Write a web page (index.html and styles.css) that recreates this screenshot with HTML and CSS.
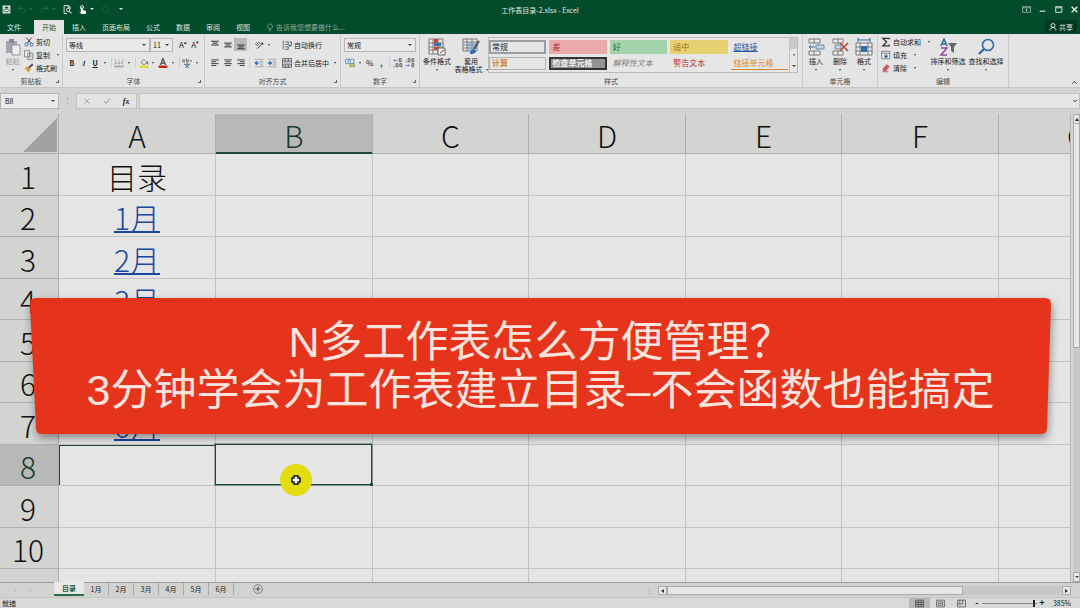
FILE: index.html
```html
<!DOCTYPE html>
<html lang="zh-CN">
<head>
  <meta charset="UTF-8">
  <title>工作表目录-2.xlsx - Excel</title>
  <meta name="viewport" content="width=device-width, initial-scale=1.0">
  <link rel="stylesheet" href="styles.css">
</head>
<body>
  <header class="title-bar">
    <div class="quick-access">
      <button aria-label="保存"><svg viewBox="0 0 16 16"><path d="M2 2h12v12H2zM4 2v5h8V2M5 14v-4h6v4" stroke-width="1.8"/></svg></button>
      <button class="dim with-drop" aria-label="撤消"><svg viewBox="0 0 16 16"><path d="M6 2L2 6l4 4M2 6h8c5 0 5 7 0 8" stroke-width="1.6"/></svg></button>
      <button class="dim with-drop" aria-label="恢复"><svg viewBox="0 0 16 16"><path d="M10 2l4 4-4 4M14 6H6c-5 0-5 7 0 8" stroke-width="1.6"/></svg></button>
      <button aria-label="打印预览"><svg viewBox="0 0 16 16"><path d="M7 15H2V1h8l3 3v3M9 1v4h4" stroke-width="1.6"/><circle cx="9" cy="9" r="3" stroke-width="1.6"/><path d="M11 11l4 4" stroke-width="2"/></svg></button>
      <button class="with-drop" aria-label="触摸模式"><svg viewBox="0 0 16 16"><circle cx="7" cy="4" r="3" stroke-width="1.6"/><path fill="#fff" d="M5 4h3v5l6 1v6H6l-4-4 3 1z"/></svg></button>
      <button class="dim" aria-label="刷新"><svg viewBox="0 0 16 16"><circle cx="8" cy="8" r="6"/></svg></button>
      <button class="with-drop" aria-label="自定义"></button>
    </div>
    <h1>工作表目录-2.xlsx - Excel</h1>
    <div class="window-buttons">
      <button aria-label="功能区显示选项"><svg viewBox="0 0 16 16"><path d="M1 3h14v10H1zM1 5h14M8 12V7M6 9l2-2 2 2"/></svg></button>
      <button aria-label="最小化"><svg viewBox="0 0 16 16"><path d="M3 11h10" stroke-width="2"/></svg></button>
      <button aria-label="最大化"><svg viewBox="0 0 16 16"><path d="M3 3h11v10H3zM3 5h11" stroke-width="1.6"/></svg></button>
      <button aria-label="关闭"><svg viewBox="0 0 16 16"><path d="M3 3l10 10M13 3L3 13" stroke-width="2.5"/></svg></button>
    </div>
  </header>

  <nav class="ribbon-tabs">
    <button class="file">文件</button>
    <button class="active">开始</button>
    <button>插入</button>
    <button>页面布局</button>
    <button>公式</button>
    <button>数据</button>
    <button>审阅</button>
    <button>视图</button>
    <button class="tell-me"><svg viewBox="0 0 16 16"><path d="M6 11C1 7 3 1 8 1s7 6 2 10zM6 13h4M7 15h2" stroke-width="1.5"/></svg>告诉我您想要做什么...</button>
    <button class="share"><svg viewBox="0 0 16 16"><circle cx="8" cy="5" r="4" stroke-width="2"/><path d="M2 15c0-8 12-8 12 0" stroke-width="2"/></svg>共享</button>
  </nav>

  <section class="ribbon">
    <div class="group clipboard">
      <div class="group-body">
        <button class="big disabled"><svg viewBox="0 0 18 18"><path fill="#aaa4b0" d="M2 3h11v12H2z"/><path fill="#8d8794" d="M5 1h5v4H5z"/><path fill="#f0eef2" stroke="#98929e" d="M8 7h8v10H8z"/></svg><span>粘贴</span><i class="arrow"></i></button>
        <div class="stack">
          <button><svg viewBox="0 0 16 16"><path stroke="#444" stroke-width="1.6" d="M4 1l7 9M12 1L5 10"/><g stroke="#2f6cab" stroke-width="1.5"><circle cx="4" cy="12" r="2.5"/><circle cx="12" cy="12" r="2.5"/></g></svg>剪切</button>
          <button><svg viewBox="0 0 16 16"><path fill="#eee" stroke="#555" d="M1 1h8v10H1zM6 5h8v10H6z"/><path stroke="#2f6cab" d="M8 8h4M8 11h4"/></svg>复制<i class="arrow"></i></button>
          <button><svg viewBox="0 0 16 16"><path fill="#d99a3a" d="M1 8l5-3 5 5-4 5z"/><path stroke="#444" stroke-width="3" d="M8 7l6-5"/></svg>格式刷</button>
        </div>
      </div>
      <footer>剪贴板<i class="launcher"></i></footer>
    </div>

    <div class="group font">
      <div class="group-body rows">
        <div class="row">
          <label class="combo font-name"><select aria-label="字体"><option>等线</option></select></label>
          <label class="combo font-size"><select aria-label="字号"><option>11</option></select></label>
          <button class="tool grow" aria-label="增大字号">A<sup>▴</sup></button>
          <button class="tool grow" aria-label="减小字号">A<sup>▾</sup></button>
        </div>
        <div class="row">
          <button class="tool"><b>B</b></button>
          <button class="tool"><b><em>I</em></b></button>
          <button class="tool"><b><u>U</u></b></button>
          <button class="drop" aria-label="下划线"></button>
          <i class="sep"></i>
          <button class="tool" aria-label="边框"><svg viewBox="0 0 16 16"><path stroke="#777" stroke-dasharray="2 1" d="M2 2v12M8 2v12M14 2v12M2 8h12"/><path stroke="#555" d="M1 14h14"/></svg></button>
          <button class="drop" aria-label="边框选项"></button>
          <i class="sep"></i>
          <button class="tool" aria-label="填充颜色"><svg viewBox="0 0 16 16"><path fill="#e8e2d0" stroke="#555" d="M3 7l5-5 5 5-5 4z"/><path stroke="#2f6cab" stroke-width="2" d="M13 6l1 4"/><path fill="#dede2c" d="M1 12h14v4H1z"/></svg></button>
          <button class="drop" aria-label="填充选项"></button>
          <button class="tool" aria-label="字体颜色"><svg viewBox="0 0 16 16"><path stroke="#444" stroke-width="2" d="M4 11l4-10 4 10M5 8h6"/><path fill="#c3221b" d="M1 12h14v4H1z"/></svg></button>
          <button class="drop" aria-label="颜色选项"></button>
          <i class="sep"></i>
          <button class="tool" aria-label="拼音"><svg viewBox="0 0 16 16"><path stroke="#444" d="M1 3h3v3H1zM7 1v5h3V3H7M12 3l2 3 2-3"/><path stroke="#2f6cab" stroke-width="1.6" d="M8 7v2M3 10h10M5 11l6 5M11 11l-6 5"/></svg></button>
          <button class="drop" aria-label="拼音选项"></button>
        </div>
      </div>
      <footer>字体<i class="launcher"></i></footer>
    </div>

    <div class="group align">
      <div class="group-body">
        <div class="rows align-tools">
          <div class="row">
            <button class="tool" aria-label="顶端对齐"><svg viewBox="0 0 16 16"><path d="M2 2h12M4 5h8M2 8h12" stroke-width="1.5"/></svg></button>
            <button class="tool" aria-label="垂直居中"><svg viewBox="0 0 16 16"><path d="M2 5h12M4 8h8M2 11h12" stroke-width="1.5"/></svg></button>
            <button class="tool pressed" aria-label="底端对齐"><svg viewBox="0 0 16 16"><path d="M2 8h12M4 11h8M2 14h12" stroke-width="1.5"/></svg></button>
            <i class="sep"></i>
            <button class="tool" aria-label="方向"><svg viewBox="0 0 16 16"><path d="M2 6l3 3 2-2-3-3M7 3l3 3M5 14L14 5M11 5h3v3" stroke-width="1.3"/></svg></button>
            <button class="drop" aria-label="方向选项"></button>
          </div>
          <div class="row">
            <button class="tool" aria-label="左对齐"><svg viewBox="0 0 16 16"><path d="M2 3h12M2 6h8M2 9h12M2 12h8" stroke-width="1.3"/></svg></button>
            <button class="tool" aria-label="居中"><svg viewBox="0 0 16 16"><path d="M2 3h12M4 6h8M2 9h12M4 12h8" stroke-width="1.3"/></svg></button>
            <button class="tool" aria-label="右对齐"><svg viewBox="0 0 16 16"><path d="M2 3h12M6 6h8M2 9h12M6 12h8" stroke-width="1.3"/></svg></button>
            <i class="sep"></i>
            <button class="tool" aria-label="减少缩进"><svg viewBox="0 0 16 16"><path stroke="#888" d="M1 2h14M9 5h6M9 8h6M9 11h6M1 14h14"/><path stroke="#2f6cab" stroke-width="2" d="M8 8H2M5 5L2 8l3 3"/></svg></button>
            <button class="tool" aria-label="增加缩进"><svg viewBox="0 0 16 16"><path stroke="#888" d="M1 2h14M9 5h6M9 8h6M9 11h6M1 14h14"/><path stroke="#2f6cab" stroke-width="2" d="M1 8h6M4 5l3 3-3 3"/></svg></button>
          </div>
        </div>
        <div class="rows">
          <button class="row text-tool"><svg viewBox="0 0 16 16"><path d="M2 1v14M5 3h5v4H5M5 11h5v4H5"/><path stroke="#2f6cab" stroke-width="1.5" d="M12 3h3v6h-4M13 7l-2 2 2 2"/></svg>自动换行</button>
          <button class="row text-tool"><svg viewBox="0 0 16 16"><path d="M1 1h14v14H1zM1 5h14M1 11h14M5 1v4M10 1v4M5 11v4M10 11v4"/><path stroke="#2f6cab" d="M3 8h10"/></svg>合并后居中<i class="arrow"></i></button>
        </div>
      </div>
      <footer>对齐方式<i class="launcher"></i></footer>
    </div>

    <div class="group number">
      <div class="group-body rows">
        <div class="row">
          <label class="combo number-format"><select aria-label="数字格式"><option>常规</option></select></label>
        </div>
        <div class="row">
          <button class="tool" aria-label="会计数字格式"><svg viewBox="0 0 16 16"><path fill="#dfe8f0" stroke="#2f6cab" d="M1 2h13v7H1z"/><circle cx="7" cy="5" r="2" stroke="#2f6cab"/><path fill="#e0c660" stroke="#777" d="M8 9h7v5H8z"/></svg></button>
          <button class="drop" aria-label="会计格式选项"></button>
          <button class="tool percent">%</button>
          <button class="tool"><b>,</b></button>
          <i class="sep"></i>
          <button class="tool" aria-label="增加小数位数"><svg viewBox="0 0 16 16"><path stroke="#2f6cab" d="M1 4h6M3 2L1 4l2 2"/><path d="M10 1h3v5h-3zM5 9h3v5H5zM11 9h3v5h-3zM2 13v2"/></svg></button>
          <button class="tool" aria-label="减少小数位数"><svg viewBox="0 0 16 16"><path stroke="#2f6cab" d="M1 12h6M5 10l2 2-2 2"/><path d="M5 1h3v5H5zM11 1h3v5h-3zM11 9h3v5h-3zM2 5v2"/></svg></button>
        </div>
      </div>
      <footer>数字<i class="launcher"></i></footer>
    </div>

    <div class="group styles">
      <div class="group-body">
        <button class="big wide"><svg viewBox="0 0 18 18"><path fill="#eee" stroke="#777" d="M1 1h14v15H1zM1 5h14M1 9h14M1 12h14M5 1v15M10 1v15"/><path fill="#c9463c" d="M6 1h4v4H6zM6 9h6v3H6z"/><path fill="#3e74b0" d="M6 5h7v3H6z"/><path fill="#eee" stroke="#666" d="M10 10h7v7h-7z"/><path stroke="#a33" d="M12 15l4-3"/></svg><span>条件格式</span><i class="arrow"></i></button>
        <button class="big wide"><svg viewBox="0 0 18 18"><path fill="#eee" stroke="#777" d="M1 1h14v12H1zM1 4h14M1 7h14M1 10h14M5 1v12M10 1v12"/><path fill="#7fa9d2" d="M5 4h10v9H5z" opacity=".6"/><path stroke="#555" stroke-width="2" d="M17 3l-5 8"/><path fill="#2f6cab" d="M8 16c0-4 3-6 5-4s0 4-5 4z"/></svg><span>套用</span><span>表格格式<i class="arrow inline"></i></span></button>
        <div class="gallery">
          <div class="swatches">
            <button class="normal">常规</button>
            <button class="bad">差</button>
            <button class="good">好</button>
            <button class="neutral">适中</button>
            <button class="hyper">超链接</button>
            <button class="calc">计算</button>
            <button class="check">检查单元格</button>
            <button class="explain">解释性文本</button>
            <button class="warn">警告文本</button>
            <button class="linked">链接单元格</button>
          </div>
          <div class="gallery-scroll">
            <button disabled aria-label="上一行"></button>
            <button aria-label="下一行"><i class="arrow"></i></button>
            <button aria-label="其他"><i class="arrow more"></i></button>
          </div>
        </div>
      </div>
      <footer>样式</footer>
    </div>

    <div class="group cells">
      <div class="group-body">
        <button class="big"><svg viewBox="0 0 18 18"><path fill="#eee" stroke="#777" d="M2 1h11v4H2zM7 1v4M2 13h11v4H2zM7 13v4"/><path fill="#c3d1de" stroke="#6f8ba6" d="M9 7h8v4H9z"/><path stroke="#2f6cab" d="M8 9H2M4 7L2 9l2 2"/></svg><span>插入</span><i class="arrow"></i></button>
        <button class="big"><svg viewBox="0 0 18 18"><path fill="#eee" stroke="#777" d="M2 1h10v4H2zM7 1v4M2 13h10v4H2zM7 13v4"/><path fill="#c3d1de" stroke="#6f8ba6" d="M4 7h6v4H4z"/><path stroke="#cb4028" stroke-width="1.6" d="M9 5l8 8M17 5l-8 8"/></svg><span>删除</span><i class="arrow"></i></button>
        <button class="big"><svg viewBox="0 0 18 18"><path stroke="#2f6cab" d="M3 2h12M3 0v4M15 0v4"/><path fill="#eee" stroke="#777" d="M1 5h16v12H1zM1 9h16M1 13h16M5 5v12M13 5v12"/><path fill="#2f6cab" d="M6 8h6v6H6z"/></svg><span>格式</span><i class="arrow"></i></button>
      </div>
      <footer>单元格</footer>
    </div>

    <div class="group editing">
      <div class="group-body">
        <div class="stack">
          <button><svg viewBox="0 0 16 16"><path stroke="#333" stroke-width="2" d="M13 4V2H3l6 6-6 6h10v-2"/></svg>自动求和<i class="arrow"></i></button>
          <button><svg viewBox="0 0 16 16"><path fill="#eee" stroke="#555" d="M1 2h13v12H1zM1 5h13"/><path stroke="#2f6cab" stroke-width="2" d="M8 6v6M5 9l3 3 3-3"/></svg>填充<i class="arrow"></i></button>
          <button><svg viewBox="0 0 16 16"><path fill="#d4575d" d="M2 10l7-8 5 3-6 8H4z"/><path stroke="#a33" d="M2 14h10"/></svg>清除<i class="arrow"></i></button>
        </div>
        <button class="big wide"><svg viewBox="0 0 18 18"><path stroke="#2f6cab" stroke-width="1.5" d="M2 8l3-7 3 7M3 6h4"/><path stroke="#8c4b9c" stroke-width="1.5" d="M2 10h6l-6 7h6"/><path fill="#666" d="M9 5h9l-3 4v6l-3-2V9z"/></svg><span>排序和筛选</span><i class="arrow"></i></button>
        <button class="big wide"><svg viewBox="0 0 18 18"><circle cx="11" cy="7" r="5.5" stroke="#2f6cab" stroke-width="1.6"/><path stroke="#2f6cab" stroke-width="2.4" d="M7 11l-5 5"/></svg><span>查找和选择</span><i class="arrow"></i></button>
      </div>
      <footer>编辑</footer>
    </div>
    <button class="collapse" aria-label="折叠功能区"><svg viewBox="0 0 16 16"><path stroke-width="2" d="M3 11l5-5 5 5"/></svg></button>
  </section>

  <section class="formula-bar">
    <label class="combo name-box"><select aria-label="名称框"><option>B8</option></select></label>
    <span class="grip">⋮</span>
    <div class="formula-buttons">
      <button class="muted" aria-label="取消"><svg viewBox="0 0 16 16"><path stroke-width="1.6" d="M3 3l10 10M13 3L3 13"/></svg></button>
      <button class="muted" aria-label="输入"><svg viewBox="0 0 16 16"><path stroke-width="2" d="M2 8l4 5 8-10"/></svg></button>
      <button class="fx"><em>fx</em></button>
    </div>
    <div class="formula-field">
      <input type="text" aria-label="编辑栏">
      <button aria-label="展开编辑栏"><svg viewBox="0 0 16 16"><path stroke-width="2.5" d="M3 5l5 5 5-5"/></svg></button>
    </div>
  </section>

  <main class="sheet">
    <div class="grid-view">
      <table>
        <colgroup>
          <col class="head-col"><col class="col"><col class="col"><col class="col slim"><col class="col"><col class="col slim"><col class="col"><col class="col">
        </colgroup>
        <thead>
          <tr><th class="corner"><span></span></th><th>A</th><th class="selected">B</th><th>C</th><th>D</th><th>E</th><th>F</th><th>G</th></tr>
        </thead>
        <tbody>
          <tr><th>1</th><td>目录</td><td></td><td></td><td></td><td></td><td></td><td></td></tr>
          <tr><th>2</th><td><a href="#m1">1月</a></td><td></td><td></td><td></td><td></td><td></td><td></td></tr>
          <tr><th>3</th><td><a href="#m2">2月</a></td><td></td><td></td><td></td><td></td><td></td><td></td></tr>
          <tr><th>4</th><td><a href="#m3">3月</a></td><td></td><td></td><td></td><td></td><td></td><td></td></tr>
          <tr><th>5</th><td><a href="#m4">4月</a></td><td></td><td></td><td></td><td></td><td></td><td></td></tr>
          <tr><th>6</th><td><a href="#m5">5月</a></td><td></td><td></td><td></td><td></td><td></td><td></td></tr>
          <tr><th>7</th><td><a href="#m6">6月</a></td><td></td><td></td><td></td><td></td><td></td><td></td></tr>
          <tr>
            <th class="selected">8</th><td class="trail"></td>
            <td class="current">
              <svg class="pointer" viewBox="0 0 32 32"><circle cx="16" cy="16" r="16" fill="#e2dc10"/><path fill="#fff" stroke="#111" stroke-width="1.5" d="M14 12h4v2h2v4h-2v2h-4v-2h-2v-4h2z"/></svg>
            </td>
            <td></td><td></td><td></td><td></td><td></td>
          </tr>
          <tr><th>9</th><td></td><td></td><td></td><td></td><td></td><td></td><td></td></tr>
          <tr><th>10</th><td></td><td></td><td></td><td></td><td></td><td></td><td></td></tr>
          <tr><th>11</th><td></td><td></td><td></td><td></td><td></td><td></td><td></td></tr>
        </tbody>
      </table>
    </div>
    <div class="v-scroll">
      <button aria-label="向上滚动"><i class="arrow up"></i></button>
      <div class="v-track"><div class="v-thumb"></div></div>
      <button aria-label="向下滚动"><i class="arrow more"></i></button>
    </div>
  </main>

  <nav class="sheet-tabs">
    <div class="tab-arrows"><span>‹</span><span>›</span></div>
    <button class="active">目录</button>
    <button>1月</button>
    <button>2月</button>
    <button>3月</button>
    <button>4月</button>
    <button>5月</button>
    <button>6月</button>
    <button class="add" aria-label="新工作表"><svg viewBox="0 0 16 16"><circle cx="8" cy="8" r="7"/><path stroke-width="1.6" d="M8 4v8M4 8h8"/></svg></button>
    <span class="grip">⋮</span>
    <div class="h-scroll">
      <button aria-label="向左滚动"><i class="arrow left"></i></button>
      <div class="h-track"><div class="h-thumb"></div></div>
      <button aria-label="向右滚动"><i class="arrow right"></i></button>
    </div>
  </nav>

  <footer class="status-bar">
    <span>就绪</span>
    <div class="views">
      <button class="active" aria-label="普通"><svg viewBox="0 0 16 16"><path d="M1 2h14v12H1zM1 6h14M1 10h14M6 2v12M11 2v12"/></svg></button>
      <button aria-label="页面布局"><svg viewBox="0 0 16 16"><path d="M1 2h14v12H1zM4 5h8v6H4zM6 8h4"/></svg></button>
      <button aria-label="分页预览"><svg viewBox="0 0 16 16"><path d="M1 2h14v12H1zM5 2v7h5V2M1 9h4"/></svg></button>
    </div>
    <button aria-label="缩小"><b>-</b></button>
    <input class="zoom" type="range" min="10" max="400" value="385" aria-label="显示比例">
    <button aria-label="放大"><b>+</b></button>
    <output>385%</output>
  </footer>

  <div class="banner">
    <svg viewBox="0 0 1021 136" preserveAspectRatio="none"><path d="M6 0H1015Q1021 0 1021 6L1017 130Q1017 136 1010 136H12Q6 136 6 130L0 6Q0 0 6 0Z"/></svg>
    <p>N多工作表怎么方便管理？</p>
    <p>3分钟学会为工作表建立目录–不会函数也能搞定</p>
  </div>
</body>
</html>
```
FILE: styles.css
```css
* {
  box-sizing: border-box;
}
body {
  margin: 0;
  height: 100vh;
  overflow: hidden;
  display: flex;
  flex-direction: column;
  background: #d6d6d5;
  color: #222;
  font: 7px/8px "Noto Sans CJK SC", sans-serif;
}
button, select, input {
  margin: 0;
  padding: 0;
  border: 0;
  background: none;
  color: inherit;
  font: inherit;
}
button {
  display: flex;
  align-items: center;
  justify-content: center;
  white-space: nowrap;
}
svg {
  display: block;
  flex: none;
  width: 10px;
  height: 10px;
  fill: none;
  stroke: currentColor;
}
svg [fill]:not([stroke]) {
  stroke: none;
}

/* small triangles */
.arrow {
  flex: none;
  border: 1px solid transparent;
  border-top: 2px solid #444;
  border-bottom: 0;
}
.arrow.up {
  border-top: 0;
  border-bottom: 3px solid #333;
  border-left-width: 2px;
  border-right-width: 2px;
}
.arrow.left {
  border: 2px solid transparent;
  border-right: 3px solid #333;
  border-left: 0;
}
.arrow.right {
  border: 2px solid transparent;
  border-left: 3px solid #333;
  border-right: 0;
}
.arrow.inline {
  display: inline-block;
  margin-left: 3px;
  vertical-align: middle;
}

/* title bar */
.title-bar {
  flex: none;
  height: 18px;
  display: grid;
  grid-template-columns: 1fr auto 1fr;
  align-items: center;
  background: #024b2b;
  color: #e4ece7;
}
.title-bar h1 {
  margin: 2px 0 0;
  font: inherit;
}
.quick-access, .window-buttons {
  display: flex;
  align-items: center;
}
.quick-access {
  padding-left: 2px;
  gap: 6px;
}
.quick-access button {
  height: 10px;
}
.quick-access svg {
  width: 9px;
  height: 9px;
}
.quick-access .dim {
  color: #2f6b4d;
}
.with-drop::after {
  content: "";
  margin: 0 1px 0 3px;
  border: 2px solid transparent;
  border-top-color: currentColor;
  border-bottom: 0;
}
.window-buttons {
  justify-content: flex-end;
  gap: 7px;
  padding-right: 1px;
}
.window-buttons svg {
  width: 9px;
  height: 9px;
}

/* ribbon tabs */
.ribbon-tabs {
  flex: none;
  height: 16px;
  padding-top: 2px;
  display: flex;
  background: #024b2b;
  color: #dbe6e0;
}
.ribbon-tabs button {
  padding: 0 8px;
}
.ribbon-tabs .file {
  padding: 0 13px 0 7px;
}
.ribbon-tabs .active {
  background: #e4e4e4;
  color: #1c5c3c;
}
.ribbon-tabs .tell-me {
  gap: 2px;
  color: #8fb09f;
}
.ribbon-tabs .tell-me svg {
  width: 8px;
  height: 9px;
}
.ribbon-tabs .share {
  margin: 0 3px 1px auto;
  padding: 0 4px;
  gap: 2px;
  background: #023a21;
}
.ribbon-tabs .share svg {
  width: 8px;
}

/* ribbon */
.ribbon {
  flex: none;
  height: 54px;
  display: flex;
  background: #e4e4e4;
  border-bottom: 1px solid #c6c6c6;
}
.group {
  display: flex;
  flex-direction: column;
  border-right: 1px solid #c9c9c9;
}
.group-body {
  flex: 1;
  display: flex;
  padding: 1px 3px 0;
}
.group footer {
  position: relative;
  height: 12px;
  line-height: 12px;
  text-align: center;
  color: #4c4c4c;
}
.launcher {
  position: absolute;
  right: 3px;
  bottom: 4px;
  width: 3px;
  height: 3px;
  border: solid #666;
  border-width: 0 1px 1px 0;
}
.clipboard { width: 63px; }
.font { width: 142px; }
.align { width: 136px; }
.number { width: 79px; }
.styles { width: 383px; }
.cells { width: 75px; }
.editing { width: 131px; }
.collapse {
  align-self: flex-end;
  margin: 0 2px 1px auto;
}
.collapse svg {
  width: 7px;
  height: 7px;
}

.big {
  flex-direction: column;
  justify-content: flex-start;
  width: 24px;
  padding-top: 3px;
}
.big svg {
  width: 18px;
  height: 18px;
  margin-bottom: 1px;
}
.big > .arrow {
  margin-top: 4px;
}
.big.wide {
  width: 34px;
}
.big.disabled {
  width: 20px;
  color: #999;
}
.stack {
  display: flex;
  flex-direction: column;
}
.stack button {
  height: 13px;
  gap: 2px;
  justify-content: flex-start;
}
.stack .arrow {
  margin-left: 5px;
}
.clipboard .stack {
  padding-left: 2px;
}

.rows {
  display: flex;
  flex-direction: column;
  gap: 5px;
}
.group-body.rows, .align .rows {
  padding-top: 4px;
}
.align .group-body {
  padding-top: 0;
}
.row {
  display: flex;
  align-items: center;
  height: 13px;
}
.tool {
  width: 12px;
  height: 13px;
}
.align .tool {
  width: 13px;
}
.tool.pressed {
  background: #b9b9b9;
}
.tool.percent {
  font-size: 8px;
}
.tool.grow {
  margin-left: 1px;
  align-items: flex-start;
  line-height: 13px;
  font-size: 8px;
}
.tool sup {
  font-size: 5px;
  line-height: 8px;
}
.drop {
  width: 8px;
  height: 13px;
}
.drop::after {
  content: "";
  border: 1px solid transparent;
  border-top: 2px solid #444;
  border-bottom: 0;
}
.sep {
  width: 1px;
  height: 11px;
  margin: 0 2px;
  background: #cfcfcf;
}
.align-tools {
  width: 74px;
}
.text-tool {
  justify-content: flex-start;
  gap: 2px;
}
.text-tool .arrow {
  margin-left: 3px;
}

.combo {
  position: relative;
  height: 14px;
  background: #e9e9e9;
  border: 1px solid #b5b5b5;
}
.combo select {
  display: block;
  width: 100%;
  height: 12px;
  padding-left: 2px;
  appearance: none;
}
.combo::after {
  content: "";
  position: absolute;
  right: 3px;
  top: 5px;
  border: 2px solid transparent;
  border-top-color: #444;
  border-bottom: 0;
}
.font-name { width: 88px; }
.font-size { width: 24px; }
.number-format { width: 74px; }
.font-size + .grow { margin-left: 4px; }

/* cell style gallery */
.gallery {
  flex: 1;
  display: flex;
  height: 36px;
  margin-top: 2px;
  border: 1px solid #bcbcbc;
  background: #e6e6e6;
}
.swatches {
  flex: 1;
  display: grid;
  grid-template-columns: repeat(5, 1fr);
  gap: 3px;
  padding: 2px 1px 2px 0;
  font-size: 8px;
}
.swatches button {
  justify-content: flex-start;
  padding-left: 3px;
}
.swatches .normal { border: 2px solid #9a9fa6; padding-left: 1px; }
.swatches .bad { background: #eaa9aa; color: #a8272c; }
.swatches .good { background: #a4d3ab; color: #1d6b31; }
.swatches .neutral { background: #e7d072; color: #94701a; }
.swatches .hyper { color: #1f5aa0; text-decoration: underline; }
.swatches .calc { border: 1px solid #b0b0b0; padding-left: 2px; color: #d3802a; font-weight: bold; }
.swatches .check { border: 2px solid #333; background: #929292; color: #eee; padding-left: 1px; font-weight: bold; }
.swatches .explain { color: #808080; font-style: italic; }
.swatches .warn { color: #cc2a2a; }
.swatches .linked { border-bottom: 1px solid #d08a35; color: #d98c34; }
.gallery-scroll {
  width: 8px;
  display: flex;
  flex-direction: column;
  border-left: 1px solid #c4c4c4;
}
.gallery-scroll button {
  flex: 1;
}
.gallery-scroll button:disabled {
  background: #cbcbcb;
}
.arrow.more {
  border-left-width: 2px;
  border-right-width: 2px;
}
.styles .group-body {
  padding-left: 0;
  padding-right: 4px;
}
.cells .group-body {
  padding-left: 1px;
  padding-right: 0;
}
.editing .group-body {
  padding-right: 0;
}
.editing .stack {
  width: 48px;
}
.editing .big {
  width: 38px;
}

/* formula bar */
.formula-bar {
  flex: none;
  height: 26px;
  padding: 5px 0;
  display: flex;
  align-items: stretch;
  background: #d3d3d3;
}
.name-box {
  width: 59px;
  height: 16px;
}
.name-box select {
  height: 14px;
  padding-left: 4px;
}
.name-box::after {
  top: 6px;
}
.grip {
  width: 17px;
  line-height: 15px;
  text-align: center;
  color: #888;
}
.formula-buttons {
  display: flex;
  width: 61px;
  background: #e3e3e3;
  border: 1px solid #c2c2c2;
}
.formula-buttons button {
  flex: 1;
}
.formula-buttons svg {
  width: 8px;
  height: 8px;
}
.muted {
  color: #999;
}
.fx {
  font: bold 8px "Liberation Serif", serif;
}
.formula-field {
  flex: 1;
  display: flex;
  margin-left: 2px;
  background: #e6e6e6;
  border: 1px solid #c2c2c2;
}
.formula-field input {
  flex: 1;
  min-width: 0;
}
.formula-field svg {
  width: 6px;
  margin-right: 1px;
}

/* worksheet */
.sheet {
  flex: 1;
  min-height: 0;
  display: flex;
}
.grid-view {
  flex: 1;
  min-width: 0;
  overflow: hidden;
  background: #e5e5e5;
}
table {
  width: 1155px;
  table-layout: fixed;
  border-collapse: separate;
  border-spacing: 0;
  font-size: 30px;
  line-height: 30px;
  font-weight: 300;
}
.head-col { width: 59px; }
.col { width: 157px; }
.col.slim { width: 156px; }
th, td {
  height: 42px;
  padding: 2px 0 0;
  border: solid #c3c3c3;
  border-width: 0 1px 1px 0;
  text-align: center;
  font-weight: inherit;
  color: #111;
}
tbody tr:nth-child(even) > * {
  height: 41px;
}
th {
  background: #d3d3d2;
  border-color: #b0b0b0;
}
thead th {
  height: 40px;
}
tbody th {
  padding-right: 2px;
}
thead .corner {
  padding: 0;
}
.corner span {
  display: block;
  width: 34px;
  height: 34px;
  margin: 3px 1px 0 auto;
  background: #a2a2a2;
  clip-path: polygon(100% 0, 100% 100%, 0 100%);
}
th.selected {
  background: #b8b8b8;
  color: #163c28;
}
thead .selected {
  box-shadow: inset 0 -1px #1c4a32;
  border-bottom-color: #1c4a32;
}
td a {
  color: #1a46a0;
  text-decoration-thickness: 2px;
  text-underline-offset: 1px;
}
.trail {
  box-shadow: inset 1px 1px #26463a;
}
.current {
  position: relative;
}
.current::before {
  content: "";
  position: absolute;
  inset: -1px 0 0 -1px;
  border: 1px solid #1c4a32;
  box-shadow: 0 0 0 1px #1c4a3266;
}
.current::after {
  content: "";
  position: absolute;
  right: -1px;
  bottom: -1px;
  width: 3px;
  height: 3px;
  background: #1c4a32;
}
.pointer {
  position: absolute;
  left: 64px;
  top: 19px;
  width: 32px;
  height: 32px;
  z-index: 1;
}

/* scroll bars */
.v-scroll {
  width: 10px;
  display: flex;
  flex-direction: column;
  padding-left: 2px;
  border-left: 1px solid #b5b5b5;
}
.v-scroll button {
  height: 10px;
  background: #e6e6e6;
  border: 1px solid #aaa;
}
.v-track {
  flex: 1;
  background: #c8c8c8;
}
.v-thumb {
  height: 50%;
  background: #e6e6e6;
  border: 1px solid #aaa;
  border-top: 0;
}
.h-scroll {
  width: 413px;
  height: 9px;
  margin: 3px 9px 0 0;
  display: flex;
}
.h-scroll button {
  width: 9px;
  background: #e6e6e6;
  border: 1px solid #aaa;
}
.h-track {
  flex: 1;
  background: #c8c8c8;
}
.h-thumb {
  width: 75%;
  height: 100%;
  background: #e6e6e6;
  border: 1px solid #aaa;
}

/* sheet tabs */
.sheet-tabs {
  flex: none;
  height: 15px;
  display: flex;
  background: #d2d2d1;
  border-top: 1px solid #9c9c9c;
}
.tab-arrows {
  width: 54px;
  display: flex;
  justify-content: center;
  gap: 13px;
  padding-right: 9px;
  line-height: 13px;
  color: #999;
}
.sheet-tabs > button {
  width: 25px;
  height: 12px;
  border-right: 1px solid #aaa;
}
.sheet-tabs > .active {
  width: 30px;
  height: 14px;
  margin-top: -1px;
  background: #e8e8e8;
  border-right: 0;
  border-bottom: 2px solid #2a6b4a;
  color: #1c5c3c;
  font-weight: bold;
}
.sheet-tabs > .add {
  width: 48px;
  border: 0;
  color: #555;
}
.sheet-tabs .grip {
  margin-left: auto;
}

/* status bar */
.status-bar {
  flex: none;
  height: 11px;
  display: flex;
  align-items: center;
  padding: 0 9px 0 2px;
  background: #d9d9d8;
  border-top: 1px solid #c4c4c4;
}
.views {
  display: flex;
  margin-left: auto;
}
.views button {
  width: 21px;
  height: 10px;
}
.views svg {
  width: 9px;
  height: 9px;
}
.views .active {
  background: #b8b8b8;
}
.status-bar > button {
  width: 10px;
  font-size: 9px;
}
.zoom {
  width: 55px;
  height: 8px;
  appearance: none;
  background: linear-gradient(#888, #888) center / 100% 1px no-repeat;
}
.zoom::-webkit-slider-thumb {
  appearance: none;
  width: 2px;
  height: 7px;
  background: #222;
}
.status-bar output {
  width: 24px;
  text-align: right;
}

/* headline laid over the worksheet */
.banner {
  position: absolute;
  left: 30px;
  right: 29px;
  top: 298px;
  height: 136px;
  padding-top: 20px;
  color: #fde3de;
  font: 43px/48px "Liberation Sans", "Noto Sans CJK SC", sans-serif;
  text-align: center;
  white-space: nowrap;
  z-index: 2;
}
.banner svg {
  position: absolute;
  inset: 0;
  width: 100%;
  height: 100%;
  overflow: visible;
  fill: #e6341c;
  stroke: none;
  z-index: -1;
  filter: drop-shadow(1px 4px 4px #0006);
}
.banner p {
  margin: 0;
}
```
